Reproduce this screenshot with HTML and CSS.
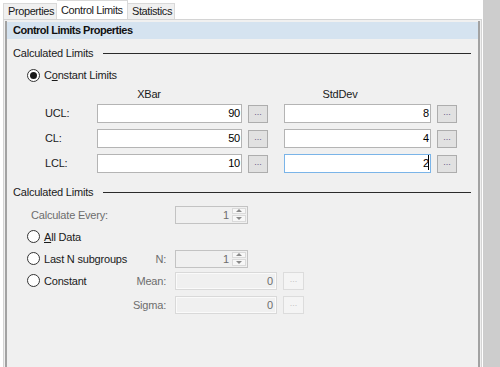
FILE: index.html
```html
<!DOCTYPE html>
<html>
<head>
<meta charset="utf-8">
<link rel="stylesheet" href="styles.css">
</head>
<body>
<div class="window">
  <div class="main">
    <div class="tabs">
      <div class="tab">Properties</div>
      <div class="tab active">Control Limits</div>
      <div class="tab">Statistics</div>
    </div>
    <div class="panel">
      <div class="frame">
        <div class="header">Control Limits Properties</div>

        <div class="section-title"><span>Calculated Limits</span><span class="rule"></span></div>

        <div class="radio-row">
          <span class="radio checked"></span><span>C<u>o</u>nstant Limits</span>
        </div>

        <div class="limits-grid">
          <div></div>
          <div class="col-head xbar">XBar</div>
          <div></div>
          <div class="col-head stddev">StdDev</div>
          <div></div>

          <div class="lbl">UCL:</div>
          <div class="field">90</div>
          <div class="btn">...</div>
          <div class="field wide">8</div>
          <div class="btn">...</div>

          <div class="lbl">CL:</div>
          <div class="field">50</div>
          <div class="btn">...</div>
          <div class="field wide">4</div>
          <div class="btn">...</div>

          <div class="lbl">LCL:</div>
          <div class="field">10</div>
          <div class="btn">...</div>
          <div class="field wide focus">2<span class="caret"></span></div>
          <div class="btn">...</div>
        </div>

        <div class="section-title second"><span>Calculated Limits</span><span class="rule"></span></div>

        <div class="calc-grid">
          <div class="dis-lbl span2">Calculate Every:</div>
          <div class="spin"><span class="val">1</span><span class="arrows"><span class="up"></span><span class="down"></span></span></div>

          <div class="radio-cell span3"><span class="radio"></span><span><u>A</u>ll Data</span></div>

          <div class="radio-cell"><span class="radio"></span><span>Last N subgroups</span></div>
          <div class="dis-lbl right">N:</div>
          <div class="spin"><span class="val">1</span><span class="arrows"><span class="up"></span><span class="down"></span></span></div>

          <div class="radio-cell"><span class="radio"></span><span>Constant</span></div>
          <div class="dis-lbl right">Mean:</div>
          <div class="dis-pair"><div class="dis-field">0</div><div class="dis-btn">...</div></div>

          <div></div>
          <div class="dis-lbl right">Sigma:</div>
          <div class="dis-pair"><div class="dis-field">0</div><div class="dis-btn">...</div></div>
        </div>
      </div>
    </div>
  </div>
  <div class="side"></div>
</div>
</body>
</html>
```

FILE: styles.css
```css
html, body {
  margin: 0;
  padding: 0;
  background: #ffffff;
}

body {
  font-family: "Liberation Sans", Arial, sans-serif;
  font-size: 11px;
  letter-spacing: -0.2px;
  color: #1a1a1a;
}

.window {
  display: flex;
  width: 500px;
  height: 367px;
  overflow: hidden;
}

.main {
  width: 483px;
  display: flex;
  flex-direction: column;
}

.side {
  width: 17px;
  background: #cdcdcd;
}

/* tabs */
.tabs {
  height: 19px;
  display: flex;
  align-items: flex-end;
  padding-left: 3px;
}

.tab {
  height: 16px;
  box-sizing: border-box;
  border: 1px solid #d9d9d9;
  border-bottom: none;
  background: #f0f0f0;
  padding: 0 0 0 4px;
  line-height: 14px;
  white-space: nowrap;
  overflow: hidden;
  letter-spacing: -0.4px;
  color: #1a1a1a;
}

.tab:nth-child(1) { width: 54px; }
.tab:nth-child(3) { width: 47px; border-left: none; }

.tab.active {
  height: 19px;
  width: 71px;
  background: #ffffff;
  border-left: none;
  padding: 2px 0 0 4px;
}

/* panel */
.panel {
  margin-left: 3px;
  width: 479px;
  box-sizing: border-box;
  flex: 1;
  border: 1px solid #d4d4d4;
  border-bottom: none;
  padding: 1px 1px 0 1px;
  background: #f0f0f0;
  display: flex;
}

.frame {
  flex: 1;
  border-left: 2px solid #a2a2a2;
  border-right: 2px solid #a2a2a2;
  padding-top: 1px;
  background: #f0f0f0;
}

.header {
  height: 17px;
  line-height: 17px;
  background: #d5e3f0;
  padding-left: 6px;
  font-weight: bold;
  letter-spacing: -0.5px;
  color: #111;
}

.section-title {
  display: flex;
  align-items: center;
  height: 14px;
  line-height: 14px;
  margin-top: 7px;
  padding-left: 6px;
}

.section-title .rule {
  flex: 1;
  height: 1px;
  background: #2a2a2a;
  margin-left: 10px;
  margin-right: 7px;
}

.section-title.second {
  margin-top: 6px;
}

/* radios */
.radio-row {
  display: flex;
  align-items: center;
  height: 14px;
  margin-top: 8px;
  padding-left: 20px;
  gap: 4px;
}

.radio {
  width: 13px;
  height: 13px;
  box-sizing: border-box;
  border: 1px solid #333;
  border-radius: 50%;
  background: #fff;
  display: flex;
  align-items: center;
  justify-content: center;
  flex: none;
}

.radio.checked::after {
  content: "";
  width: 7px;
  height: 7px;
  border-radius: 50%;
  background: #1a1a1a;
}

/* limits grid */
.limits-grid {
  display: grid;
  grid-template-columns: 52px 145px 26px 163px 26px;
  grid-template-rows: 17px 25px 25px 25px;
  align-items: start;
  margin-top: 5px;
  margin-left: 38px;
}

.col-head {
  line-height: 14px;
  text-align: center;
}

.col-head.xbar { padding-right: 41px; }
.col-head.stddev { padding-left: 16px; padding-right: 35px; }

.lbl {
  line-height: 19px;
}

.field {
  height: 19px;
  box-sizing: border-box;
  border: 1px solid #b4b4b4;
  background: #fff;
  text-align: right;
  padding-right: 1px;
  line-height: 17px;
  color: #000;
}

.field.wide {
  width: 147px;
  justify-self: end;
}

.field.focus {
  border-color: #7ab4e8;
}

.caret {
  display: inline-block;
  width: 0;
  height: 15px;
  border-left: 1px solid #000;
  vertical-align: -3px;
  margin-left: -1px;
}

.btn {
  justify-self: end;
  width: 20px;
  height: 18px;
  margin-top: 1px;
  box-sizing: border-box;
  border: 1px solid #adadad;
  background: #e1e1e1;
  text-align: center;
  line-height: 12px;
  color: #6a5a8a;
  font-size: 9px;
  letter-spacing: 0;
}

/* calculated section */
.calc-grid {
  display: grid;
  grid-template-columns: 101px 38px 9px auto;
  grid-template-rows: 21px 23px 21px 23px 26px;
  align-items: center;
  margin-top: 5px;
  margin-left: 20px;
}

.calc-grid > .spin,
.calc-grid > .dis-pair {
  grid-column: 4;
}

.calc-grid > .dis-lbl.right {
  grid-column: 2;
}

.span2 { grid-column: 1 / 3; }
.span3 { grid-column: 1 / 5; }

.dis-lbl {
  color: #6d6d6d;
}

.span2.dis-lbl { padding-left: 4px; }

.dis-lbl.right {
  text-align: right;
}

.radio-cell {
  display: flex;
  align-items: center;
  gap: 4px;
  white-space: nowrap;
}

.spin {
  width: 73px;
  height: 18px;
  box-sizing: border-box;
  border: 1px solid #c3c3c3;
  background: #f0f0f0;
  display: flex;
  justify-content: flex-end;
  color: #6d6d6d;
}

.spin .val {
  line-height: 16px;
  padding-right: 3px;
}

.spin .arrows {
  width: 14px;
  display: flex;
  flex-direction: column;
  gap: 1px;
  padding: 1px 1px 1px 0;
}

.spin .up,
.spin .down {
  flex: 1;
  background: #f7f7f7;
  border: 1px solid #dadada;
  position: relative;
}

.spin .up::after,
.spin .down::after {
  content: "";
  position: absolute;
  left: 50%;
  top: 50%;
  margin-left: -3px;
  border-left: 3px solid transparent;
  border-right: 3px solid transparent;
}

.spin .up::after {
  margin-top: -2px;
  border-bottom: 3px solid #8a8a8a;
}

.spin .down::after {
  margin-top: -1px;
  border-top: 3px solid #8a8a8a;
}

.dis-pair {
  display: flex;
  align-items: center;
  gap: 6px;
}

.dis-field {
  width: 102px;
  height: 18px;
  box-sizing: border-box;
  border: 1px solid #d9d9d9;
  box-shadow: inset 0 0 0 1px #fafafa;
  background: #f0f0f0;
  text-align: right;
  padding-right: 3px;
  line-height: 16px;
  color: #6d6d6d;
}

.dis-btn {
  width: 21px;
  height: 18px;
  box-sizing: border-box;
  border: 1px solid #dcdcdc;
  background: #f4f4f4;
  text-align: center;
  line-height: 12px;
  font-size: 9px;
  letter-spacing: 0;
  color: #c4c4c4;
}
```
